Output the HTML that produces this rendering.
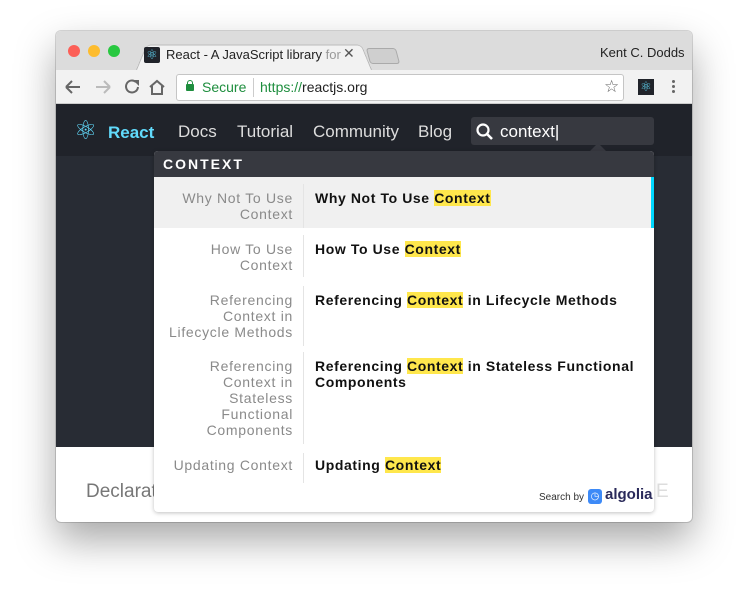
<!DOCTYPE html><html><head><style>
*{margin:0;padding:0;box-sizing:border-box}
body{width:748px;height:603px;background:#fff;font-family:"Liberation Sans",sans-serif;position:relative;overflow:hidden}
.win{position:absolute;left:56px;top:31px;width:636px;height:491px;border-radius:5px;overflow:hidden;box-shadow:0 18px 40px rgba(0,0,0,.35),0 0 0 1px rgba(0,0,0,.15);background:#fff}
.a{position:absolute}
.lc{position:absolute;left:0;width:139px;text-align:right;color:#8a8a8a;font-size:14px;line-height:16px;letter-spacing:.7px}
.rc{position:absolute;left:161px;width:330px;color:#111;font-size:14px;line-height:16px;font-weight:bold;letter-spacing:.6px}
.dv{position:absolute;left:149px;width:1px;background:#e4e4e4}
.hl{background:#ffe74c}
.nv{position:absolute;top:91px;font-size:17px;color:#ddd}
</style></head><body>
<div class="win">
<div class="a" style="left:0;top:0;width:636px;height:39px;background:#dcdcdc"></div>
<div class="a" style="left:12px;top:14px;width:12px;height:12px;border-radius:50%;background:#fc5f57"></div>
<div class="a" style="left:32px;top:14px;width:12px;height:12px;border-radius:50%;background:#fdbc2e"></div>
<div class="a" style="left:52px;top:14px;width:12px;height:12px;border-radius:50%;background:#28c840"></div>
<div class="a" style="left:80px;top:11px;width:236px;height:28px;background:#f2f2f2;border:1px solid #bbb;border-bottom:none;border-radius:5px 5px 0 0;transform:perspective(40px) rotateX(8deg);transform-origin:bottom"></div>
<div class="a" style="left:88px;top:16px;width:16px;height:16px;background:#20232a;border-radius:2px;color:#61dafb;font-size:13px;text-align:center;line-height:16px">⚛</div>
<div class="a" style="left:110px;top:16px;font-size:13px;color:#222">React - A JavaScript library <span style="color:#999">for</span></div>
<div class="a" style="left:287px;top:14px;font-size:14px;color:#555">✕</div>
<div class="a" style="left:312px;top:17px;width:30px;height:16px;background:#cfcfcf;border:1px solid #aaa;border-radius:3px;transform:skewX(15deg)"></div>
<div class="a" style="left:544px;top:14px;font-size:13px;color:#222">Kent C. Dodds</div>
<div class="a" style="left:0;top:39px;width:636px;height:34px;background:#f2f2f2;border-bottom:1px solid #ccc"></div>
<svg class="a" style="left:8px;top:47px" width="120" height="18" viewBox="0 0 120 18">
<path d="M2 9h14M2 9l6-6M2 9l6 6" stroke="#666" stroke-width="2" fill="none"/>
<path d="M46 9h-14M46 9l-6-6M46 9l-6 6" stroke="#bbb" stroke-width="2" fill="none"/>
<path d="M72 4a6 6 0 1 0 2 5" stroke="#666" stroke-width="2" fill="none"/><path d="M69 2h6v6z" fill="#666"/>
<path d="M86 9l7-6 7 6M88 8v8h10v-8" stroke="#666" stroke-width="2" fill="none"/>
</svg>
<div class="a" style="left:120px;top:43px;width:448px;height:27px;background:#fff;border:1px solid #c5c5c5;border-radius:3px"></div>
<div class="a" style="left:130px;top:53px;width:8px;height:7px;background:#1e8e3e;border-radius:1px"></div>
<div class="a" style="left:131px;top:49px;width:6px;height:6px;border:1.5px solid #1e8e3e;border-bottom:none;border-radius:3px 3px 0 0"></div>
<div class="a" style="left:146px;top:48px;font-size:14px;color:#1e8e3e">Secure</div>
<div class="a" style="left:197px;top:47px;width:1px;height:19px;background:#ccc"></div>
<div class="a" style="left:204px;top:48px;font-size:14px;color:#1e8e3e">https://<span style="color:#222">reactjs.org</span></div>
<div class="a" style="left:548px;top:46px;font-size:17px;color:#666">☆</div>
<div class="a" style="left:582px;top:48px;width:16px;height:16px;background:#20232a;color:#61dafb;font-size:13px;text-align:center;line-height:16px">⚛</div>
<div class="a" style="left:616px;top:49px;width:3px;height:3px;border-radius:50%;background:#666;box-shadow:0 5px 0 #666,0 10px 0 #666"></div>
<div class="a" style="left:0;top:73px;width:636px;height:52px;background:#20232a"></div>
<div class="a" style="left:0;top:125px;width:636px;height:291px;background:#282c34"></div>
<div class="a" style="left:18px;top:86px;font-size:26px;color:#61dafb;line-height:26px">⚛</div>
<div class="a" style="left:52px;top:92px;font-size:17px;font-weight:bold;color:#61dafb">React</div>
<div class="nv" style="left:122px">Docs</div>
<div class="nv" style="left:181px">Tutorial</div>
<div class="nv" style="left:257px">Community</div>
<div class="nv" style="left:362px">Blog</div>
<div class="a" style="left:415px;top:86px;width:183px;height:28px;background:#373940;border-radius:3px"></div>
<svg class="a" style="left:419px;top:91px" width="20" height="20" viewBox="0 0 20 20"><circle cx="8" cy="8" r="5.5" stroke="#fff" stroke-width="2.2" fill="none"/><path d="M12 12l5 5" stroke="#fff" stroke-width="2.6"/></svg>
<div class="a" style="left:444px;top:91px;font-size:17px;color:#fff">context<span style="font-weight:100">|</span></div>
<div class="a" style="left:30px;top:450px;font-size:19px;color:#777">Declarat</div>
<div class="a" style="left:600px;top:450px;font-size:19px;color:#ddd">E</div>
<div class="a" style="left:534px;top:112px;width:0;height:0;border-left:8px solid transparent;border-right:8px solid transparent;border-bottom:8px solid #373940"></div>
<div class="a" style="left:98px;top:120px;width:500px;height:361px;background:#fff;border-radius:4px;overflow:hidden;box-shadow:0 1px 4px rgba(0,0,0,.25)">
 <div class="a" style="left:0;top:0;width:500px;height:26px;background:#373940;color:#fff;font-size:14px;font-weight:bold;letter-spacing:2px;padding:5px 0 0 9px">CONTEXT</div>
 <div class="a" style="left:0;top:26px;width:500px;height:51px;background:#f0f0f0"></div>
 <div class="a" style="left:497px;top:26px;width:3px;height:51px;background:#00d8ff"></div>
 <div class="lc" style="top:39px">Why Not To Use<br>Context</div><div class="dv" style="top:33px;height:44px"></div>
 <div class="rc" style="top:39px">Why Not To Use <span class="hl">Context</span></div>
 <div class="lc" style="top:90px">How To Use<br>Context</div><div class="dv" style="top:84px;height:42px"></div>
 <div class="rc" style="top:90px">How To Use <span class="hl">Context</span></div>
 <div class="lc" style="top:141px">Referencing<br>Context in<br>Lifecycle Methods</div><div class="dv" style="top:135px;height:60px"></div>
 <div class="rc" style="top:141px">Referencing <span class="hl">Context</span> in Lifecycle Methods</div>
 <div class="lc" style="top:207px">Referencing<br>Context in<br>Stateless<br>Functional<br>Components</div><div class="dv" style="top:201px;height:92px"></div>
 <div class="rc" style="top:207px">Referencing <span class="hl">Context</span> in Stateless Functional Components</div>
 <div class="lc" style="top:306px">Updating Context</div><div class="dv" style="top:302px;height:30px"></div>
 <div class="rc" style="top:306px">Updating <span class="hl">Context</span></div>
 <div class="a" style="left:385px;top:341px;font-size:10px;color:#333">Search by</div>
 <div class="a" style="left:434px;top:338px;width:14px;height:15px;background:#3d8af7;border-radius:3px;color:#fff;font-size:10px;text-align:center;line-height:15px">◷</div>
 <div class="a" style="left:451px;top:335px;font-size:15px;font-weight:bold;color:#2a2a5a">algolia</div>
</div>
</div>
</body></html>
